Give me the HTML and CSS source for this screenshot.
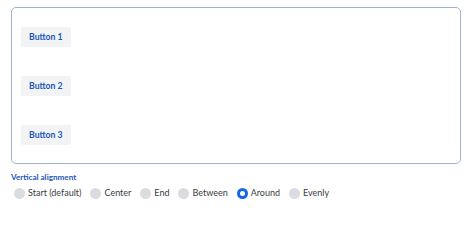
FILE: index.html
```html
<!DOCTYPE html>
<html>
<head>
<meta charset="utf-8">
<link rel="stylesheet" href="styles.css">
</head>
<body>
<div class="page">
  <div class="stack">
    <button class="btn">Button 1</button>
    <button class="btn">Button 2</button>
    <button class="btn">Button 3</button>
  </div>
  <div class="field">
    <div class="legend">Vertical alignment</div>
    <div class="radios">
      <label class="radio"><span class="dot"></span>Start (default)</label>
      <label class="radio"><span class="dot"></span>Center</label>
      <label class="radio"><span class="dot"></span>End</label>
      <label class="radio"><span class="dot"></span>Between</label>
      <label class="radio"><span class="dot on"></span>Around</label>
      <label class="radio"><span class="dot"></span>Evenly</label>
    </div>
  </div>
</div>
</body>
</html>
```
FILE: styles.css
```css
html, body {
  margin: 0;
  background: #fff;
}
.page {
  padding: 7px 13px 0 11px;
  font-family: Lato, "Open Sans", sans-serif;
}
.stack {
  height: 147px;
  border: 1px solid #9fb3d6;
  border-radius: 5px;
  padding: 4px 9px;
  display: flex;
  flex-direction: column;
  justify-content: space-around;
  align-items: flex-start;
}
.btn {
  border: 0;
  background: #f2f3f5;
  color: #2156b8;
  font-family: inherit;
  font-weight: 700;
  font-size: 8.7px;
  height: 20px;
  padding: 0 8px;
  border-radius: 2px;
}
.field {
  margin-top: 7px;
}
.legend {
  color: #2156b8;
  font-size: 8.1px;
  font-weight: 700;
  line-height: 12px;
}
.radios {
  display: flex;
  gap: 9px;
  margin-top: 3px;
  margin-left: 3px;
}
.radio {
  display: flex;
  align-items: center;
  gap: 3px;
  font-size: 9px;
  color: #3a3d42;
  line-height: 14px;
}
.dot {
  width: 11px;
  height: 11px;
  border-radius: 50%;
  background: #dadcdf;
  box-sizing: border-box;
}
.dot.on {
  background: #fff;
  border: 3.2px solid #1366e8;
}
```
